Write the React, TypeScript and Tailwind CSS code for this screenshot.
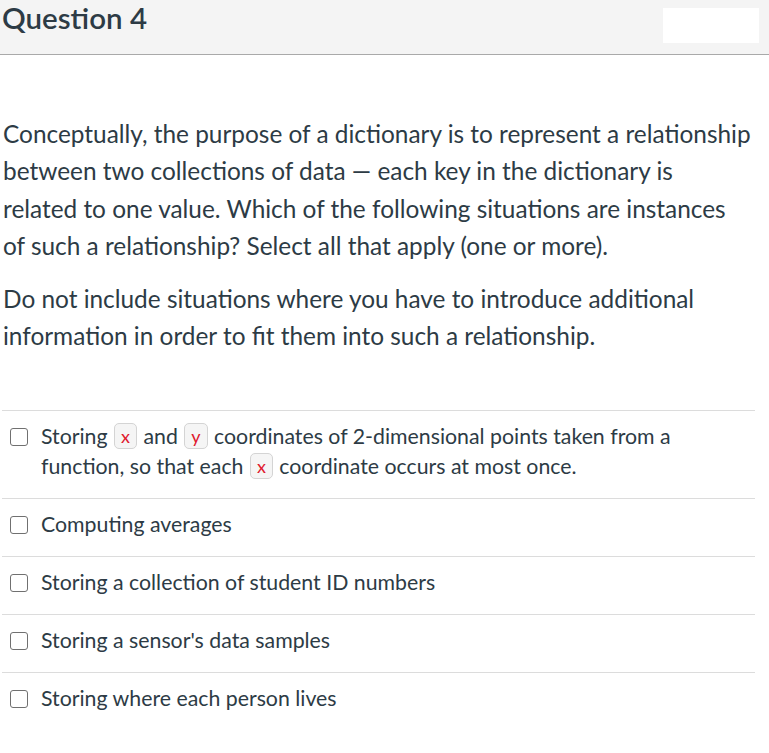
import React from "react";

function Code({ children }: { children: React.ReactNode }) {
  return (
    <code className="mx-[1px] inline-block rounded-[5px] border border-[#d4d4d4] bg-[#f5f5f5] px-[6px] align-[1px] text-[18px] leading-[24px] text-[#e0182d] [font-family:Lato,sans-serif]">
      {children}
    </code>
  );
}

function Answer({ children, last }: { children: React.ReactNode; last?: boolean }) {
  return (
    <li className={"flex items-start gap-[13px] pb-[17px] pl-[8px] pr-[10px] pt-[10px] " + (last ? "" : "border-b border-[#dcdcdc]")}>
      <span className="mt-[7px] h-[18px] w-[18px] shrink-0 rounded-[3px] border-[1.5px] border-[#707070] bg-white" />
      <span className="text-[21.3px] leading-[30px] text-[#2d3b45]">{children}</span>
    </li>
  );
}

export default function App() {
  return (
    <div className="min-h-screen bg-white [font-family:Lato,sans-serif] text-[#2d3b45]">
      <header className="flex h-[55px] items-start justify-between border-b border-[#a9a9a9] bg-[#f4f4f4] pl-[2px] pr-[10px]">
        <h2 className="text-[29.5px] font-semibold leading-[36px]">Question 4</h2>
        <div className="mt-[8px] h-[35px] w-[96px] bg-white" />
      </header>
      <div className="pl-[3px] pr-[14px] pt-[60px]">
        <p className="text-[24.4px] leading-[37.3px]">
          Conceptually, the purpose of a dictionary is to represent a relationship between two collections of data — each key in the dictionary is
          <br />
          related to one value. Which of the following situations are instances
          <br />
          of such a relationship? Select all that apply (one or more).
        </p>
        <p className="mt-[16px] text-[24.4px] leading-[37.3px]">
          Do not include situations where you have to introduce additional information in order to fit them into such a relationship.
        </p>
      </div>
      <ul className="ml-[2px] mr-[14px] mt-[55px] border-t border-[#dcdcdc]">
        <Answer>
          Storing <Code>x</Code> and <Code>y</Code> coordinates of 2-dimensional points taken from a function, so that each <Code>x</Code> coordinate occurs at most once.
        </Answer>
        <Answer>Computing averages</Answer>
        <Answer>Storing a collection of student ID numbers</Answer>
        <Answer>Storing a sensor's data samples</Answer>
        <Answer last>Storing where each person lives</Answer>
      </ul>
    </div>
  );
}
